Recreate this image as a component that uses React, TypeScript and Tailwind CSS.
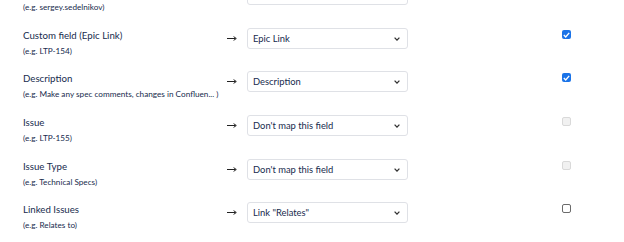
import React from "react";

type Row = {
  label?: string;
  hint: string;
  value: string;
  state: "checked" | "disabled" | "unchecked" | "none";
  h: string;
};

const rows: Row[] = [
  { hint: "(e.g. sergey.sedelnikov)", value: "", state: "none", h: "h-[44px]" },
  { label: "Custom field (Epic Link)", hint: "(e.g. LTP-154)", value: "Epic Link", state: "checked", h: "h-[43px]" },
  { label: "Description", hint: "(e.g. Make any spec comments, changes in Confluen... )", value: "Description", state: "checked", h: "h-[44px]" },
  { label: "Issue", hint: "(e.g. LTP-155)", value: "Don't map this field", state: "disabled", h: "h-[44px]" },
  { label: "Issue Type", hint: "(e.g. Technical Specs)", value: "Don't map this field", state: "disabled", h: "h-[43px]" },
  { label: "Linked Issues", hint: "(e.g. Relates to)", value: 'Link "Relates"', state: "unchecked", h: "h-[43px]" },
];

function Chevron() {
  return (
    <svg width="6" height="4" viewBox="0 0 6 4" className="shrink-0">
      <path d="M0.6 0.6 L3 3.1 L5.4 0.6" fill="none" stroke="#333" strokeWidth="1.3" />
    </svg>
  );
}

function Arrow() {
  return (
    <svg width="10" height="5" viewBox="0 0 10 5">
      <path d="M0 2.5 H8.6" stroke="#222" strokeWidth="1" />
      <path d="M6.6 0.6 L9.3 2.5 L6.6 4.4" fill="none" stroke="#222" strokeWidth="1" />
    </svg>
  );
}

function Check({ state }: { state: Row["state"] }) {
  if (state === "none") return <div className="w-[9px] h-[9px]" />;
  if (state === "checked")
    return (
      <div className="w-[9px] h-[9px] rounded-[2px] bg-[#1a73e8] flex items-center justify-center">
        <svg width="7" height="6" viewBox="0 0 7 6">
          <path d="M0.8 3.1 L2.7 4.9 L6.2 0.9" fill="none" stroke="#fff" strokeWidth="1.4" />
        </svg>
      </div>
    );
  if (state === "disabled")
    return <div className="w-[9px] h-[9px] rounded-[2px] bg-[#f1f1f1] border border-[#d9d9d9]" />;
  return <div className="w-[9px] h-[9px] rounded-[2px] bg-white border border-[#6b6b6b]" />;
}

export default function App() {
  return (
    <div
      className="w-[624px] h-[242px] overflow-hidden bg-white text-[#172b4d]"
      style={{ fontFamily: 'Lato, "Noto Sans", sans-serif' }}
    >
      <div className="mt-[-16px] flex flex-col">
        {rows.map((r, i) => (
          <div key={i} className={`${r.h} flex items-start shrink-0`}>
            <div className="w-[227px] pl-[23px] flex flex-col">
              <div className="h-[14px] text-[9.7px] leading-[14px] whitespace-nowrap">{r.label ?? ""}</div>
              <div className="mt-[3px] text-[8.2px] leading-[12px] whitespace-nowrap">{r.hint}</div>
            </div>
            <div className="w-[20px] h-[21px] flex items-center">
              <Arrow />
            </div>
            <div className="w-[161px] h-[21px] border border-[#dfe1e6] rounded-[3px] bg-white flex items-center justify-between pl-[5px] pr-[7px]">
              <span className="text-[9.4px] leading-none whitespace-nowrap">{r.value}</span>
              <Chevron />
            </div>
            <div className="ml-[154px] mt-[2px]">
              <Check state={r.state} />
            </div>
          </div>
        ))}
      </div>
    </div>
  );
}
